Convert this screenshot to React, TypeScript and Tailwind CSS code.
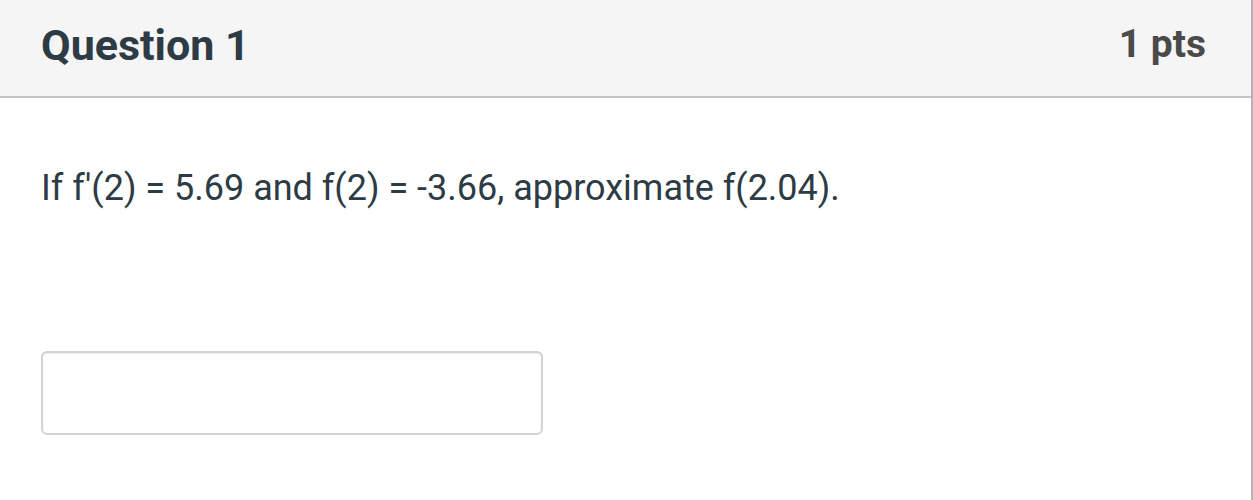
export default function App() {
  return (
    <div className="w-[1253px] h-[500px] bg-white overflow-hidden" style={{ fontFamily: "Roboto, 'Liberation Sans', sans-serif" }}>
      <div className="h-full border-r-2 border-[#b3b3b3]">
        <div className="h-[98px] bg-[#f5f5f5] border-b-2 border-[#c4c4c4] flex items-start justify-between pl-[41px] pr-[45px] pt-[24px]">
          <div className="text-[43px] font-bold text-[#2d3b45] leading-none">Question 1</div>
          <div className="text-[39px] font-bold text-[#4a4a4a] leading-none pt-[1px]">1 pts</div>
        </div>
        <div className="pl-[41px] pt-[72px]">
          <p className="text-[36px] text-[#2d3b45] leading-none">If f'(2) = 5.69 and f(2) = -3.66, approximate f(2.04).</p>
          <div className="mt-[145px] w-[502px] h-[84px] border-2 border-[#d3d3d3] rounded-[6px] shadow-[inset_0_1px_2px_rgba(0,0,0,0.08)]"></div>
        </div>
      </div>
    </div>
  );
}
